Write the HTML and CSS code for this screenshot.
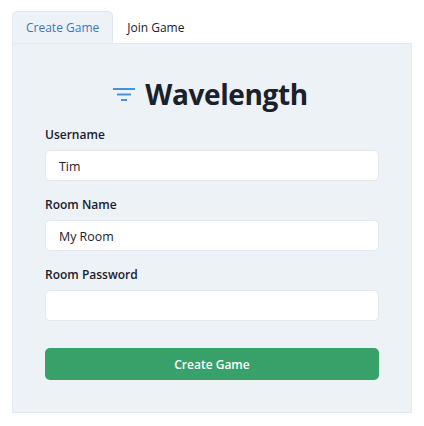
FILE: index.html
```html
<!DOCTYPE html>
<html>
<head>
  <title>Wavelength</title>
  <link rel="stylesheet" href="styles.css">
</head>
<body>
  <div id="game">
    <div class="tabs">
      <button class="tab active">Create Game</button>
      <button class="tab">Join Game</button>
    </div>
    <div class="panel">
      <div class="title">
        <svg class="logo" width="24" height="16" viewBox="0 0 24 16">
          <path d="M1 3h22M5 8.500h14M9 14h6" stroke="#4a90d9" stroke-width="2" fill="none"/>
        </svg>
        <h1>Wavelength</h1>
      </div>
      <form class="form">
        <div class="field">
          <label for="username">Username</label>
          <input id="username" type="text" value="Tim">
        </div>
        <div class="field">
          <label for="roomName">Room Name</label>
          <input id="roomName" type="text" value="My Room">
        </div>
        <div class="field">
          <label for="roomPassword">Room Password</label>
          <input id="roomPassword" type="password">
        </div>
        <button class="submit" type="button">Create Game</button>
      </form>
    </div>
  </div>
</body>
</html>
```

FILE: styles.css
```css
body {
  margin: 0;
  background-color: #fff;
  font-family: "Open Sans", "Noto Sans", sans-serif;
  color: #1a202c;
}
#game {
  width: 400px;
  padding: 11px 12px 0;
}
.tabs {
  display: flex;
  height: 32px;
}
.tab {
  padding: 0 13px;
  font-family: inherit;
  font-size: 12px;
  color: #1a202c;
  background: none;
  border: 1px solid transparent;
  border-bottom: none;
}
.tab.active {
  color: #3a78b8;
  background-color: #edf2f7;
  border-color: #e2e8f0;
  border-radius: 5px 5px 0 0;
}
.panel {
  box-sizing: border-box;
  height: 370px;
  padding: 30px 32px 0;
  background-color: #edf2f7;
  border: 1px solid #e2e8f0;
}
.title {
  display: flex;
  align-items: center;
  justify-content: center;
  gap: 9px;
  height: 40px;
  padding-right: 4px;
}
.title h1 {
  margin: 0;
  font-size: 28px;
  font-weight: 700;
  letter-spacing: -0.4px;
}
.form {
  margin-top: 12px;
}
.field {
  margin-bottom: 15px;
}
.field label {
  display: block;
  margin-bottom: 6px;
  font-size: 12px;
  font-weight: 600;
  line-height: 18px;
  color: #1a202c;
}
.field input {
  display: block;
  box-sizing: border-box;
  width: 100%;
  height: 31px;
  padding: 1px 13px 0;
  font-family: inherit;
  font-size: 12.400px;
  color: #1a202c;
  background-color: #fff;
  border: 1px solid #e2e8f0;
  border-radius: 5px;
}
.submit {
  display: block;
  width: 100%;
  height: 32px;
  margin-top: 27px;
  font-family: inherit;
  font-size: 12px;
  font-weight: 600;
  color: #fff;
  background-color: #38a169;
  border: none;
  border-radius: 5px;
}
```
